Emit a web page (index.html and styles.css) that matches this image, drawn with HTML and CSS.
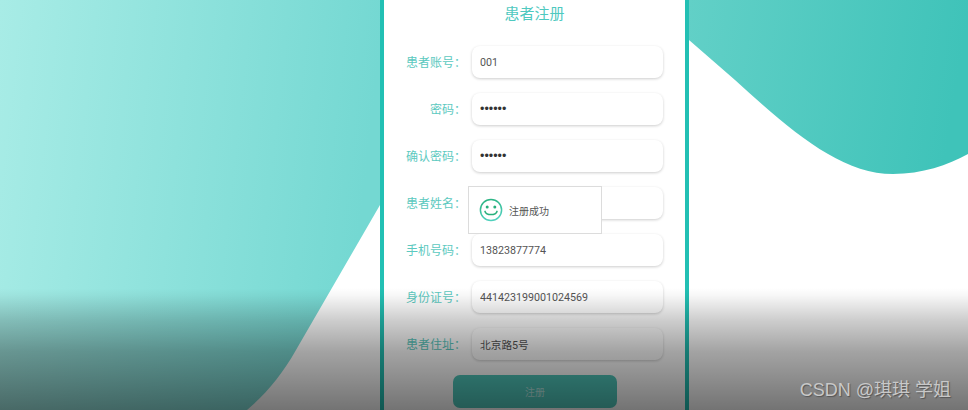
FILE: index.html
```html
<!DOCTYPE html>
<html lang="zh-CN">
<head>
    <meta charset="UTF-8">
    <title>患者注册</title>
    <link rel="stylesheet" href="styles.css">
</head>
<body>
    <div class="page">
        <svg class="bg" width="968" height="410" viewBox="0 0 968 410">
            <defs>
                <linearGradient id="leftbg" x1="0" y1="0" x2="1" y2="0.12">
                    <stop offset="0" stop-color="#a8ece6"/>
                    <stop offset="1" stop-color="#74d8d2"/>
                </linearGradient>
                <linearGradient id="rightbg" x1="0" y1="0" x2="1" y2="0.1">
                    <stop offset="0" stop-color="#62d0c7"/>
                    <stop offset="1" stop-color="#3fc3b9"/>
                </linearGradient>
            </defs>
            <path fill="url(#leftbg)" d="M0 0H380V205L296 350C282 375 265 395 247 410H0Z"/>
            <path fill="url(#rightbg)" d="M689 40L735 80C790 130 840 174 893 174C922 174 948 165 968 154V0H689Z"/>
        </svg>

        <div class="panel">
            <h1 class="title">患者注册</h1>
            <form class="regform">
                <div class="row">
                    <label>患者账号：</label>
                    <input type="text" value="001">
                </div>
                <div class="row">
                    <label>密码：</label>
                    <input class="pwd" type="password" value="123456">
                </div>
                <div class="row">
                    <label>确认密码：</label>
                    <input class="pwd" type="password" value="123456">
                </div>
                <div class="row">
                    <label>患者姓名：</label>
                    <input type="text" value="">
                </div>
                <div class="row">
                    <label>手机号码：</label>
                    <input type="text" value="13823877774">
                </div>
                <div class="row">
                    <label>身份证号：</label>
                    <input type="text" value="441423199001024569">
                </div>
                <div class="row">
                    <label>患者住址：</label>
                    <input type="text" value="北京路5号">
                </div>
                <button type="button" class="submit">注册</button>
            </form>
        </div>

        <div class="toast">
            <svg width="24" height="24" viewBox="0 0 24 24" fill="none">
                <defs>
                    <linearGradient id="smile" x1="0" y1="0" x2="0.3" y2="1">
                        <stop offset="0" stop-color="#27b07c"/>
                        <stop offset="1" stop-color="#4fd0bc"/>
                    </linearGradient>
                </defs>
                <circle cx="12" cy="12" r="10.6" stroke="url(#smile)" stroke-width="1.5"/>
                <circle cx="8.2" cy="9" r="1.5" fill="#27b07c"/>
                <circle cx="15.8" cy="9" r="1.5" fill="#27b07c"/>
                <path d="M6 13.4C7.4 17.6 16.6 17.6 18 13.4" stroke="#27b07c" stroke-width="1.6" stroke-linecap="round"/>
            </svg>
            <span>注册成功</span>
        </div>

        <div class="shade"></div>
        <div class="mark">CSDN @琪琪 学姐</div>
    </div>
</body>
</html>
```

FILE: styles.css
```css
* {
    margin: 0;
    padding: 0;
    box-sizing: border-box;
}

html, body {
    height: 100%;
    overflow: hidden;
}

body {
    background: #fff;
    font-family: "Noto Sans CJK SC", "Noto Sans", sans-serif;
}

.page {
    position: relative;
    width: 968px;
    height: 410px;
    overflow: hidden;
}

.bg {
    position: absolute;
    top: 0;
    left: 0;
    display: block;
}

.panel {
    position: relative;
    width: 309px;
    height: 410px;
    margin-left: 380px;
    background: #fff;
    border-left: 4px solid #22c0b4;
    border-right: 4px solid #22c0b4;
    overflow: hidden;
}

.title {
    height: 46px;
    padding-top: 2px;
    font-size: 15px;
    line-height: 22px;
    font-weight: 400;
    text-align: center;
    color: #4fc9bf;
}

.regform {
    display: flex;
    flex-direction: column;
    gap: 15px;
}

.row {
    display: flex;
    align-items: center;
    gap: 6px;
    height: 32px;
}

.row label {
    width: 82px;
    padding-bottom: 2px;
    font-size: 12px;
    text-align: right;
    color: #5cc9c0;
}

.row input {
    width: 191px;
    height: 32px;
    padding: 0 8px;
    border: none;
    border-radius: 8px;
    outline: none;
    background: #fff;
    box-shadow: 0 1px 3px rgba(0, 0, 0, 0.2);
    font-family: Roboto, "Noto Sans CJK SC", sans-serif;
    font-size: 10.7px;
    color: #555;
}

.row input.pwd {
    font-family: "Liberation Sans", sans-serif;
    font-size: 12.5px;
    color: #333;
}

.submit {
    align-self: flex-start;
    width: 164px;
    height: 33px;
    margin-left: 69px;
    border: none;
    border-radius: 7px;
    background: #4fc7bb;
    font-family: "Noto Sans CJK SC", "Noto Sans", sans-serif;
    font-size: 10px;
    color: rgba(255, 255, 255, 0.6);
}

.toast {
    position: absolute;
    top: 186px;
    left: 468px;
    display: flex;
    align-items: center;
    gap: 6px;
    width: 134px;
    height: 48px;
    padding-left: 10px;
    background: #fff;
    border: 1px solid #dcdcdc;
    font-size: 10px;
    color: #555;
}

.shade {
    position: absolute;
    left: 0;
    right: 0;
    top: 288px;
    height: 122px;
    background: linear-gradient(rgba(0, 0, 0, 0), rgba(0, 0, 0, 0.03) 6%, rgba(0, 0, 0, 0.2) 27%, rgba(0, 0, 0, 0.36) 52%, rgba(0, 0, 0, 0.55));
}

.mark {
    position: absolute;
    right: 17px;
    bottom: 10px;
    font-family: "Liberation Sans", "Noto Sans CJK SC", sans-serif;
    font-size: 18px;
    line-height: 20px;
    color: #c8c8c8;
    text-shadow: 1px 1px 1px #555;
}
```
